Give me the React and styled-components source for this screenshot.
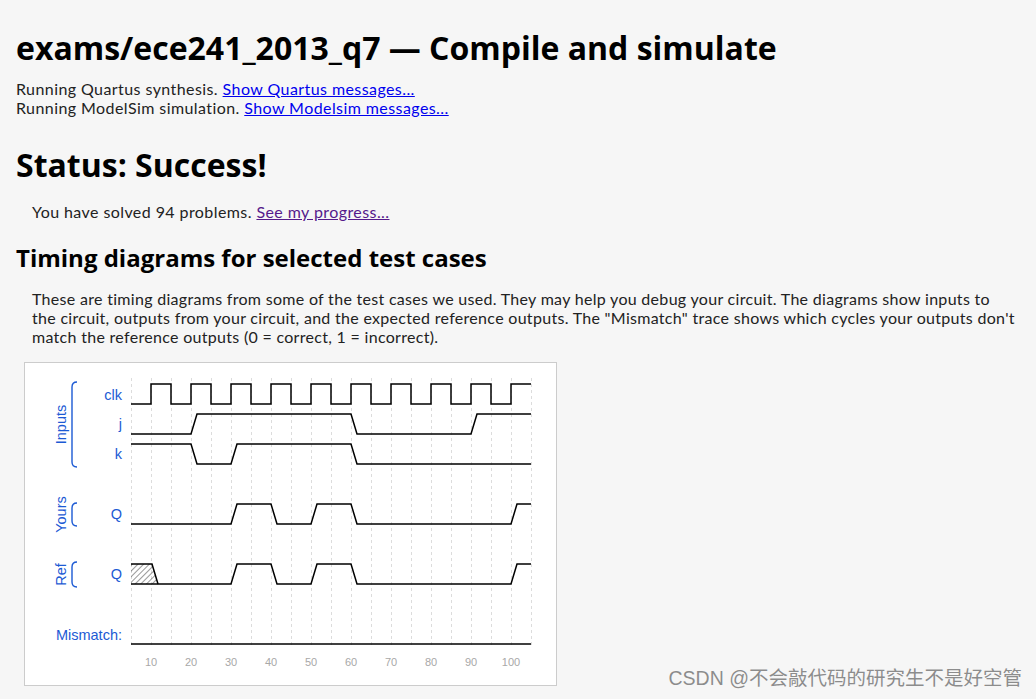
import React from 'react';
import styled, { createGlobalStyle } from 'styled-components';

const COLORS = {
  page: '#f6f6f6',
  text: '#222222',
  heading: '#000000',
  link: '#0000ee',
  visited: '#551a8b',
  label: '#1c5ad4',
  grid: '#dcdcdc',
  axis: '#a8a8a8',
};

const GlobalStyle = createGlobalStyle`
  html, body {
    margin: 0;
    padding: 0;
    background: ${COLORS.page};
    min-height: 100%;
  }
  body {
    font-family: Lato, "Open Sans", sans-serif;
    color: ${COLORS.text};
  }
`;

// Page wrapper
const Page = styled.main`
  position: relative;
  min-height: 699px;
  box-sizing: border-box;
  padding: 29px 16px 0 16px;
`;

const Title = styled.h1`
  font-family: "Open Sans", sans-serif;
  font-weight: 700;
  font-size: 32px;
  line-height: 38px;
  color: ${COLORS.heading};
  margin: 0 0 ${({ gap }) => gap}px 0;
`;

const SubTitle = styled.h3`
  font-family: "Open Sans", sans-serif;
  font-weight: 700;
  font-size: 24px;
  line-height: 29px;
  color: ${COLORS.heading};
  margin: 0 0 17px 0;
`;

const Log = styled.div`
  font-size: 16px;
  line-height: 19px;
  letter-spacing: 0.42px;
  margin: 0 0 29.5px 0;
`;

const Indented = styled.p`
  font-size: 16px;
  line-height: 19px;
  letter-spacing: ${({ spacing = 0.42 }) => spacing}px;
  margin: 0 4px ${({ gap }) => gap}px 16px;
`;

const TextLink = styled.a`
  color: ${({ visited }) => (visited ? COLORS.visited : COLORS.link)};
  text-decoration: underline;
  cursor: pointer;
`;

const DiagramBox = styled.div`
  width: 533px;
  height: 324px;
  margin-left: 8px;
  box-sizing: border-box;
  border: 1px solid #cccccc;
  background: #ffffff;
  display: flex;
`;

const Watermark = styled.div`
  position: absolute;
  right: 14px;
  bottom: 8px;
  font-family: "Liberation Sans", "Noto Sans CJK SC", sans-serif;
  font-size: 19.5px;
  color: #8c8c8c;
  text-shadow: 0 0 1px #ffffff;
`;

// --- timing diagram helpers (page coordinates) ---
const X0 = 131;
const X1 = 531;
const RAMP = 6;

const clockPath = (hi, lo) => {
  let y = lo;
  let d = `M${X0},${y}`;
  for (let x = 151; x < X1; x += 20) {
    y = y === lo ? hi : lo;
    d += ` H${x} V${y}`;
  }
  return d + ` H${X1}`;
};

const wavePath = (hi, lo, startHigh, edges, start = X0) => {
  let y = startHigh ? hi : lo;
  let d = `M${start},${y}`;
  edges.forEach((x) => {
    const ny = y === hi ? lo : hi;
    d += ` H${x} L${x + RAMP},${ny}`;
    y = ny;
  });
  return d + ` H${X1}`;
};

const signals = [
  { name: 'clk', y: 400 },
  { name: 'j', y: 429 },
  { name: 'k', y: 459 },
  { name: 'Q', y: 519 },
  { name: 'Q', y: 579 },
  { name: 'Mismatch:', y: 640 },
];

const groups = [
  { name: 'Inputs', top: 382, bottom: 467 },
  { name: 'Yours', top: 503, bottom: 526 },
  { name: 'Ref', top: 562, bottom: 587 },
];

const Bracket = ({ top, bottom }) => (
  <path
    d={`M77,${top} Q72,${top} 72,${top + 5} V${bottom - 5} Q72,${bottom} 77,${bottom}`}
    fill="none"
    stroke={COLORS.label}
    strokeWidth="1.4"
  />
);

const Diagram = () => {
  const grid = [];
  for (let x = X0; x <= X1; x += 20) grid.push(x);
  const ticks = [10, 20, 30, 40, 50, 60, 70, 80, 90, 100];
  const qEdges = [231, 271, 311, 351, 511];

  return (
    <svg width="531" height="322" viewBox="25 363 531 322">
      <defs>
        <pattern id="hatch" width="4" height="4" patternUnits="userSpaceOnUse" patternTransform="rotate(45)">
          <line x1="0" y1="0" x2="0" y2="4" stroke="#333" strokeWidth="1" />
        </pattern>
      </defs>

      {grid.map((x) => (
        <line key={x} x1={x + 0.5} y1="378" x2={x + 0.5} y2="648" stroke={COLORS.grid} strokeDasharray="3,3" />
      ))}

      <g fontFamily="'Liberation Sans', Arial, sans-serif" fontSize="14.5" fill={COLORS.label} textAnchor="end">
        {signals.map((s, i) => (
          <text key={i} x="122" y={s.y}>{s.name}</text>
        ))}
      </g>

      <g fontFamily="'Liberation Sans', Arial, sans-serif" fontSize="14.5" fill={COLORS.label} textAnchor="middle">
        {groups.map((g) => {
          const cy = (g.top + g.bottom) / 2;
          return (
            <text key={g.name} x="66" y={cy} transform={`rotate(-90 66 ${cy})`}>{g.name}</text>
          );
        })}
      </g>
      {groups.map((g) => <Bracket key={g.name} {...g} />)}

      <polygon points="131,564 152,564 158,584 131,584" fill="url(#hatch)" />

      <g fill="none" stroke="#000" strokeWidth="1.5">
        <path d={clockPath(384, 404)} />
        <path d={wavePath(414, 434, false, [191, 351, 471])} />
        <path d={wavePath(444, 464, true, [191, 231, 351])} />
        <path d={wavePath(504, 524, false, qEdges)} />
        <path d={`M131,564 H152 L158,584`} />
        <path d={`M131,584 H158`} />
        <path d={wavePath(564, 584, false, qEdges, 158)} />
        <path d={`M131,644 H531`} />
      </g>

      <g fontFamily="'Liberation Sans', Arial, sans-serif" fontSize="11" fill={COLORS.axis} textAnchor="middle">
        {ticks.map((t) => (
          <text key={t} x={131 + (t - 5) * 4} y="666">{t}</text>
        ))}
      </g>
    </svg>
  );
};

const App = () => (
  <>
    <GlobalStyle />
    <Page>
      <Title gap={11.5}>exams/ece241_2013_q7 — Compile and simulate</Title>
      <Log>
        Running Quartus synthesis. <TextLink>Show Quartus messages...</TextLink>
        <br />
        Running ModelSim simulation. <TextLink>Show Modelsim messages...</TextLink>
      </Log>

      <Title as="h2" gap={17.5}>Status: Success!</Title>
      <Indented gap={22}>
        You have solved 94 problems. <TextLink visited>See my progress...</TextLink>
      </Indented>

      <SubTitle>Timing diagrams for selected test cases</SubTitle>
      <Indented gap={16.5} spacing={0.3}>
        These are timing diagrams from some of the test cases we used. They may help you debug your circuit. The
        diagrams show inputs to the circuit, outputs from your circuit, and the expected reference outputs. The
        "Mismatch" trace shows which cycles your outputs don't match the reference outputs (0 = correct, 1 = incorrect).
      </Indented>

      <DiagramBox>
        <Diagram />
      </DiagramBox>

      <Watermark>CSDN @不会敲代码的研究生不是好空管</Watermark>
    </Page>
  </>
);

export default App;
